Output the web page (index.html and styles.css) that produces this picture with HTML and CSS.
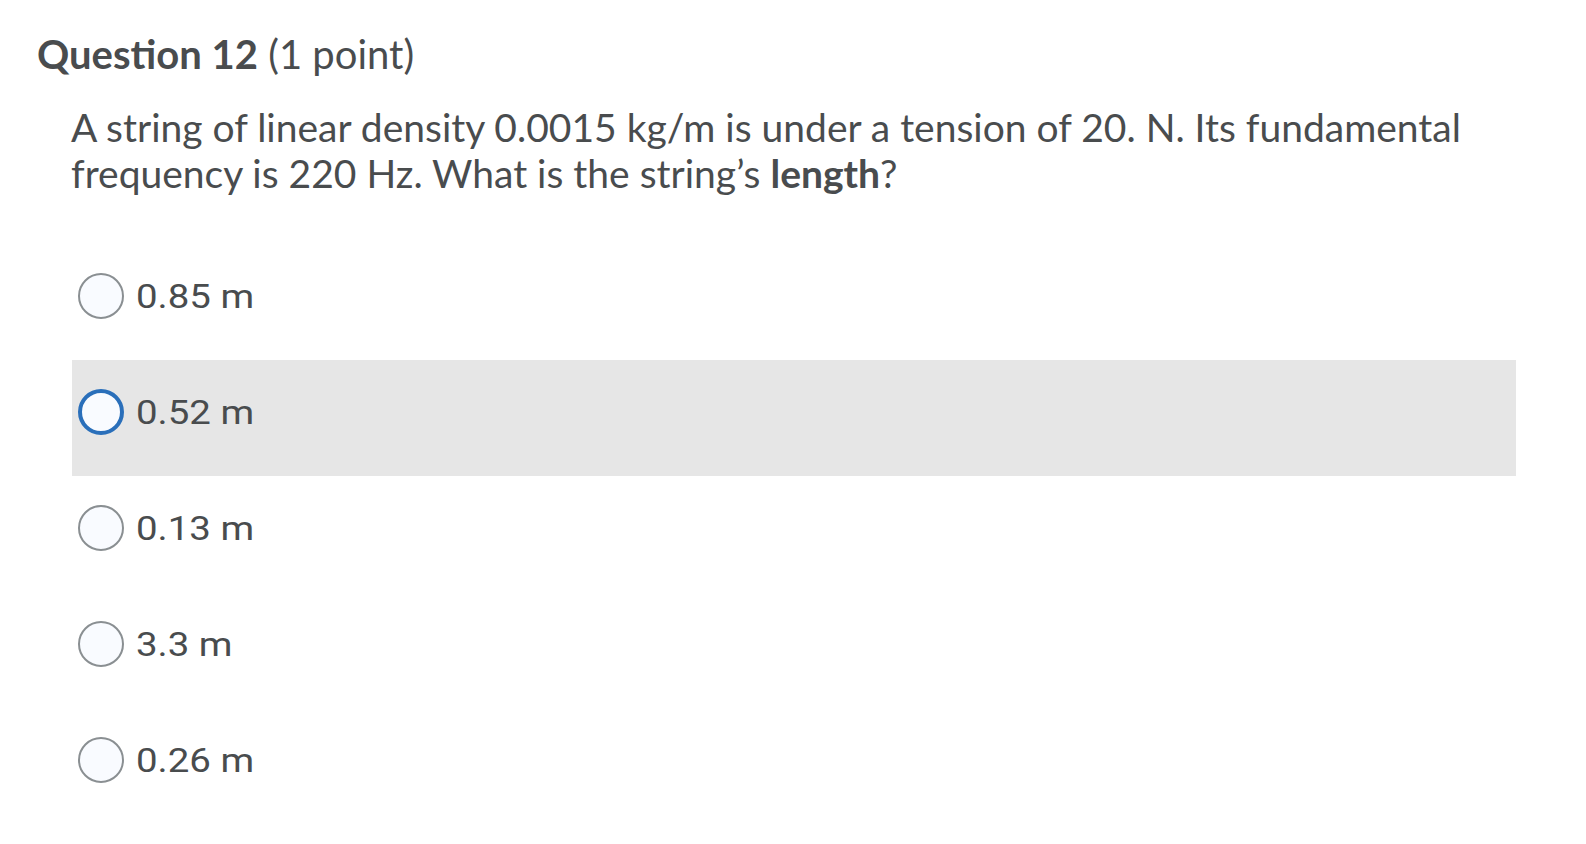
FILE: index.html
```html
<!DOCTYPE html>
<html>
<head>
<meta charset="utf-8">
<link rel="stylesheet" href="styles.css">
</head>
<body>
<div class="page">
  <h2 class="qtitle"><strong>Question 12</strong> (1 point)</h2>
  <div class="qtext">A string of linear density 0.0015 kg/m is under a tension of 20. N. Its fundamental frequency is 220 Hz. What is the string’s <strong>length</strong>?</div>
  <div class="options">
    <label class="opt"><span class="radio"></span><span class="lbl">0.85 m</span></label>
    <label class="opt hover"><span class="radio focus"></span><span class="lbl">0.52 m</span></label>
    <label class="opt"><span class="radio"></span><span class="lbl">0.13 m</span></label>
    <label class="opt"><span class="radio"></span><span class="lbl">3.3 m</span></label>
    <label class="opt"><span class="radio"></span><span class="lbl">0.26 m</span></label>
  </div>
</div>
</body>
</html>
```
FILE: styles.css
```css
html, body {
  margin: 0;
  padding: 0;
  background: #ffffff;
}
.page {
  padding: 30px 0 0 37px;
  color: #494c4e;
  font-family: Lato, "Noto Sans", sans-serif;
}
.qtitle {
  margin: 0;
  font-size: 40px;
  font-weight: 400;
  line-height: 48px;
}
.qtitle strong {
  font-weight: 700;
}
.qtext {
  margin: 26px 0 0 34px;
  width: 1440px;
  font-size: 39px;
  line-height: 46px;
}
.qtext strong {
  font-weight: 700;
}
.options {
  margin: 48px 0 0 35px;
  width: 1444px;
  display: flex;
  flex-direction: column;
}
.opt {
  height: 116px;
  box-sizing: border-box;
  padding: 0 0 12px 6px;
  display: flex;
  align-items: center;
  gap: 12px;
}
.opt.hover {
  background: #e6e6e6;
}
.radio {
  width: 46px;
  height: 46px;
  box-sizing: border-box;
  border-radius: 50%;
  border: 2px solid #8a8f92;
  background: #f9fbff;
  flex: none;
}
.radio.focus {
  border: 4px solid #2a6fba;
}
.lbl {
  display: inline-block;
  font-family: Roboto, "Liberation Sans", sans-serif;
  font-size: 34px;
  color: #494c4e;
  transform: scaleX(1.13);
  transform-origin: left center;
}
```
